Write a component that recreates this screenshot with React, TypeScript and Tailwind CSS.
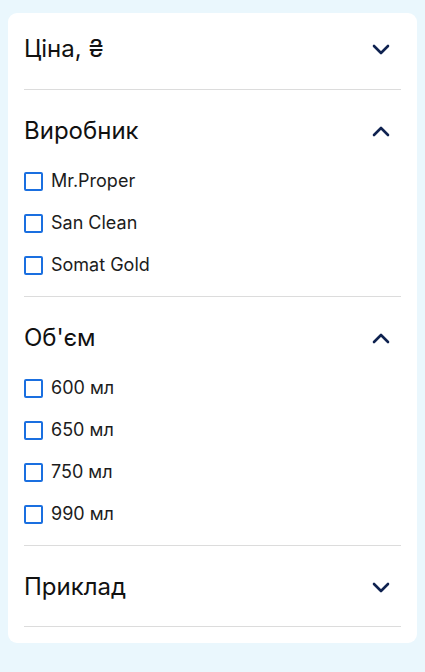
import { useState } from "react"

interface Section {
  id: string
  title: string
  options: string[]
  open: boolean
}

const SECTIONS: Section[] = [
  { id: "price", title: "Ціна, ₴", options: [], open: false },
  {
    id: "brand",
    title: "Виробник",
    options: ["Mr.Proper", "San Clean", "Somat Gold"],
    open: true,
  },
  {
    id: "volume",
    title: "Об'єм",
    options: ["600 мл", "650 мл", "750 мл", "990 мл"],
    open: true,
  },
  { id: "example", title: "Приклад", options: [], open: false },
]

const Chevron = ({ up }: { up: boolean }) => (
  <svg
    width="18"
    height="11"
    viewBox="0 0 18 11"
    fill="none"
    className={up ? "rotate-180" : ""}
  >
    <path
      d="M2 2l7 7 7-7"
      stroke="#0f2250"
      strokeWidth="2.6"
      strokeLinecap="round"
      strokeLinejoin="round"
    />
  </svg>
)

const App = () => {
  const [open, setOpen] = useState<Record<string, boolean>>(
    Object.fromEntries(SECTIONS.map((s) => [s.id, s.open]))
  )
  const [checked, setChecked] = useState<Record<string, boolean>>({})

  return (
    <div
      className="min-h-[672px] bg-[#eaf7fd] pt-[13px] px-2"
      style={{ fontFamily: "Inter, 'Noto Sans', sans-serif" }}
    >
      <div className="rounded-[9px] bg-white px-4 pb-4">
        {SECTIONS.map((section, index) => (
          <div key={section.id} className="border-b border-[#dcdcdc]">
            <button
              onClick={() =>
                setOpen((prev) => ({ ...prev, [section.id]: !prev[section.id] }))
              }
              className={`flex h-10 w-full items-center justify-between box-content ${
                index === 0 ? "pt-4 pb-5" : "pt-[21px] pb-[19px]"
              }`}
            >
              <span className="text-[24px] leading-none text-[#111111]">
                {section.title}
              </span>

              <span className="flex h-10 w-10 items-center justify-center">
                <Chevron up={open[section.id]} />
              </span>
            </button>

            {open[section.id] && section.options.length > 0 && (
              <div className="flex flex-col gap-5 pb-5">
                {section.options.map((option) => (
                  <label
                    key={option}
                    className="flex h-[22px] cursor-pointer items-center gap-2"
                  >
                    <input
                      type="checkbox"
                      checked={!!checked[option]}
                      onChange={() =>
                        setChecked((prev) => ({ ...prev, [option]: !prev[option] }))
                      }
                      className="sr-only"
                    />
                    <span
                      className={`h-[19px] w-[19px] shrink-0 rounded-[2px] border-2 border-[#1a6fe0] ${
                        checked[option] ? "bg-[#1a6fe0]" : "bg-white"
                      }`}
                    />
                    <span className="text-[18px] leading-none text-[#1c1c1c]">
                      {option}
                    </span>
                  </label>
                ))}
              </div>
            )}
          </div>
        ))}
      </div>
    </div>
  )
}

export default App
